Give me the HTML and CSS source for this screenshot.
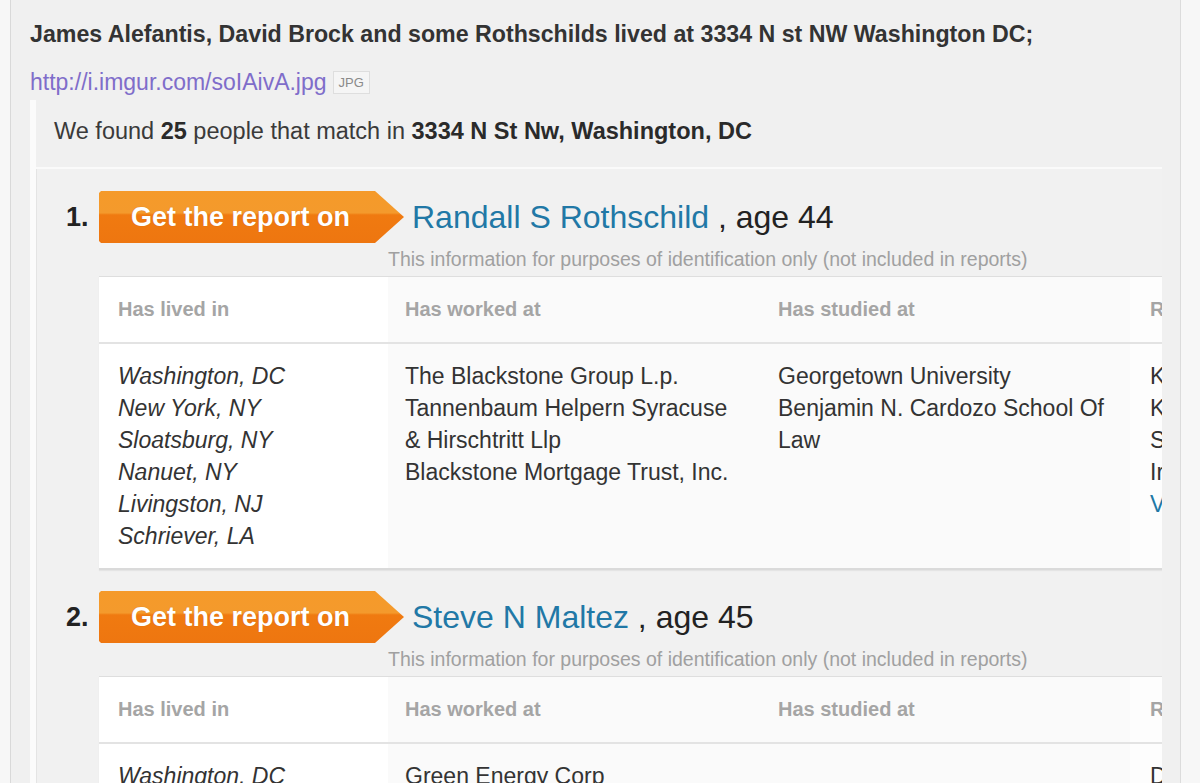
FILE: index.html
```html
<!DOCTYPE html>
<html>
<head>
<meta charset="utf-8">
<link rel="stylesheet" href="styles.css">
</head>
<body>
<div class="page">
  <div class="post">
    <p class="title">James Alefantis, David Brock and some Rothschilds lived at 3334 N st NW Washington DC;</p>
    <p class="linkline"><a class="imglink" href="#">http://i.imgur.com/soIAivA.jpg</a><span class="badge">JPG</span></p>
    <div class="shot">
      <div class="found">We found&nbsp;<b>25</b>&nbsp;people that match in&nbsp;<b>3334 N St Nw, Washington, DC</b></div>
      <div class="results">
        <div class="result">
          <div class="head">
            <span class="num">1.</span>
            <span class="btn">Get the report on</span>
            <span class="name"><a href="#">Randall S Rothschild</a> , age 44</span>
          </div>
          <div class="note">This information for purposes of identification only (not included in reports)</div>
          <div class="table">
            <div class="row hdr">
              <div class="cell c1">Has lived in</div>
              <div class="cell c2">Has worked at</div>
              <div class="cell c3">Has studied at</div>
              <div class="cell c4">R</div>
            </div>
            <div class="row body">
              <div class="cell c1 places">
                <div>Washington, DC</div>
                <div>New York, NY</div>
                <div>Sloatsburg, NY</div>
                <div>Nanuet, NY</div>
                <div>Livingston, NJ</div>
                <div>Schriever, LA</div>
              </div>
              <div class="cell c2">
                <div>The Blackstone Group L.p.</div>
                <div>Tannenbaum Helpern Syracuse</div>
                <div>&amp; Hirschtritt Llp</div>
                <div>Blackstone Mortgage Trust, Inc.</div>
              </div>
              <div class="cell c3">
                <div>Georgetown University</div>
                <div>Benjamin N. Cardozo School Of</div>
                <div>Law</div>
              </div>
              <div class="cell c4">
                <div>K</div>
                <div>K</div>
                <div>S</div>
                <div>Ir</div>
                <div><a href="#">V</a></div>
              </div>
            </div>
          </div>
        </div>
        <div class="result">
          <div class="head">
            <span class="num">2.</span>
            <span class="btn">Get the report on</span>
            <span class="name"><a href="#">Steve N Maltez</a> , age 45</span>
          </div>
          <div class="note">This information for purposes of identification only (not included in reports)</div>
          <div class="table">
            <div class="row hdr">
              <div class="cell c1">Has lived in</div>
              <div class="cell c2">Has worked at</div>
              <div class="cell c3">Has studied at</div>
              <div class="cell c4">R</div>
            </div>
            <div class="row body">
              <div class="cell c1 places">
                <div>Washington, DC</div>
              </div>
              <div class="cell c2">
                <div>Green Energy Corp</div>
              </div>
              <div class="cell c3"></div>
              <div class="cell c4">
                <div>D</div>
              </div>
            </div>
          </div>
        </div>
      </div>
    </div>
  </div>
</div>
</body>
</html>
```
FILE: styles.css
```css
html, body {
  margin: 0;
  padding: 0;
  height: 783px;
  overflow: hidden;
  background: #f7f7f7;
  font-family: "Liberation Sans", Arial, sans-serif;
}

.page {
  padding-left: 10px;
  height: 783px;
}

.post {
  width: 1171px;
  height: 783px;
  background: #f0f0f0;
  border-left: 1px solid #d9d9d9;
  border-right: 1px solid #dcdcdc;
  padding-left: 19px;
  box-sizing: border-box;
  overflow: hidden;
}

.title {
  margin: 0;
  padding-top: 21px;
  font-size: 23.2px;
  line-height: 27px;
  font-weight: bold;
  color: #333;
  white-space: nowrap;
}

.linkline {
  margin: 0;
  padding-top: 21px;
  display: flex;
  align-items: center;
  gap: 6px;
  height: 27px;
}

.imglink {
  font-size: 23px;
  line-height: 27px;
  color: #7f6dca;
  text-decoration: none;
}

.badge {
  display: inline-block;
  border: 1px solid #dedede;
  background: #f5f5f5;
  color: #8a8a8a;
  font-size: 13px;
  line-height: 21px;
  padding: 0 5px;
}

.shot {
  margin-top: 4px;
  width: 1132px;
  height: 700px;
  border-left: 6px solid #fbfbfb;
  box-sizing: border-box;
  background: #f0f0f0;
  overflow: hidden;
}

.found {
  height: 62px;
  padding-bottom: 5px;
  padding-left: 18px;
  display: flex;
  align-items: center;
  font-size: 23.5px;
  color: #3a3a3a;
  white-space: nowrap;
  border-bottom: 2px solid #fafafa;
}

.found b {
  color: #2a2a2a;
}

.results {
  border-left: 1px solid #e4e4e4;
  background: #f1f1f1;
  padding: 22px 0 0 29px;
}

.result {
  margin-bottom: 21px;
}

.head {
  display: flex;
  align-items: center;
  height: 52px;
}

.num {
  width: 33px;
  font-size: 27px;
  font-weight: bold;
  color: #222;
}

.btn {
  width: 305px;
  height: 52px;
  box-sizing: border-box;
  padding-left: 32px;
  display: flex;
  align-items: center;
  color: #fff;
  font-size: 27px;
  font-weight: bold;
  text-shadow: 0 0 1px rgba(150, 60, 0, 0.4);
  background: linear-gradient(#f59a2a 0%, #f49a2c 42%, #f07a10 46%, #ee7610 100%);
  clip-path: polygon(0 2px, 2px 0, 276px 0, 305px 26px, 276px 52px, 2px 52px, 0 50px);
}

.name {
  margin-left: 8px;
  font-size: 32px;
  color: #222;
  white-space: nowrap;
}

.name a {
  color: #2178a6;
  text-decoration: none;
}

.note {
  height: 33px;
  line-height: 33px;
  padding-left: 322px;
  font-size: 19.5px;
  color: #a0a0a0;
  white-space: nowrap;
}

.table {
  margin-left: 33px;
  width: 1063px;
  border-top: 1px solid #dedede;
  border-bottom: 2px solid #dadada;
  box-shadow: 0 1px 1px rgba(0, 0, 0, 0.05);
}

.row {
  display: grid;
  grid-template-columns: 289px 372px 370px 32px;
}

.hdr {
  height: 65px;
  border-bottom: 2px solid #e3e3e3;
}

.hdr .cell {
  display: flex;
  align-items: center;
  font-size: 20px;
  font-weight: bold;
  color: #a5a5a5;
}

.cell {
  padding-left: 18px;
  background: #fafafa;
  overflow: hidden;
}

.cell.c1 {
  padding-left: 19px;
  background: #fff;
}

.cell.c2 {
  padding-left: 17px;
}

.cell.c4 {
  padding-left: 20px;
  background: #fdfdfd;
}

.body .cell {
  padding-top: 16px;
  padding-bottom: 16px;
  font-size: 23px;
  line-height: 32px;
  color: #333;
  white-space: nowrap;
}

.body .places {
  font-style: italic;
}

.body .c4 a {
  color: #2178a6;
  text-decoration: none;
}
```
